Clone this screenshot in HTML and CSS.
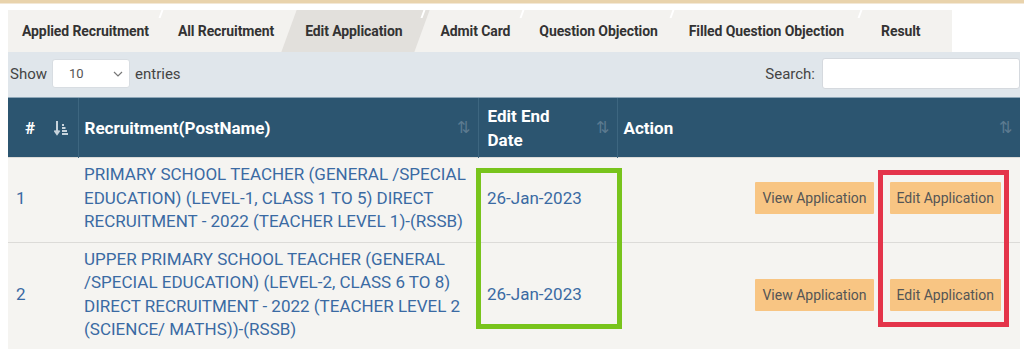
FILE: index.html
```html
<!DOCTYPE html>
<html lang="en">
<head>
  <meta charset="UTF-8" />
  <title>Edit Application</title>
  <link rel="stylesheet" href="styles.css">
</head>
<body>
  <div class="top-strip"></div>
  <div class="page">
    <ul class="tabs">
      <li>Applied Recruitment</li>
      <li>All Recruitment</li>
      <li class="active">Edit Application</li>
      <li>Admit Card</li>
      <li>Question Objection</li>
      <li>Filled Question Objection</li>
      <li class="last">Result</li>
    </ul>

    <div class="toolbar">
      <label class="length">Show
        <span class="select">10 <svg width="10" height="6" viewBox="0 0 10 6"><path d="M1 1l4 4 4-4" fill="none" stroke="#777" stroke-width="1.2"/></svg></span>
        entries</label>
      <label class="search">Search: <input type="text"></label>
    </div>

    <div class="table-wrap">
      <table class="grid">
        <thead>
          <tr>
            <th class="c-num"># <span class="sort on">
              <svg width="14" height="16" viewBox="0 0 14 16"><path d="M3 1v12M0.5 10.5L3 14l2.5-3.5" fill="none" stroke="#c7d3dc" stroke-width="2"/><rect x="8" y="4" width="2" height="2" fill="#c7d3dc"/><rect x="8" y="7" width="3.5" height="2" fill="#c7d3dc"/><rect x="8" y="10" width="5" height="2" fill="#c7d3dc"/><rect x="8" y="13" width="6" height="2" fill="#c7d3dc"/></svg></span></th>
            <th class="c-post">Recruitment(PostName) <span class="sort">&#x21C5;</span></th>
            <th class="c-date">Edit End<br>Date <span class="sort">&#x21C5;</span></th>
            <th class="c-act">Action <span class="sort">&#x21C5;</span></th>
          </tr>
        </thead>
        <tbody>
          <tr>
            <td>1</td>
            <td>PRIMARY SCHOOL TEACHER (GENERAL /SPECIAL EDUCATION) (LEVEL-1, CLASS 1 TO 5) DIRECT RECRUITMENT - 2022 (TEACHER LEVEL 1)-(RSSB)</td>
            <td>26-Jan-2023</td>
            <td class="actions"><a class="btn">View Application</a><a class="btn">Edit Application</a></td>
          </tr>
          <tr>
            <td>2</td>
            <td>UPPER PRIMARY SCHOOL TEACHER (GENERAL /SPECIAL EDUCATION) (LEVEL-2, CLASS 6 TO 8) DIRECT RECRUITMENT - 2022 (TEACHER LEVEL 2 (SCIENCE/ MATHS))-(RSSB)</td>
            <td>26-Jan-2023</td>
            <td class="actions"><a class="btn">View Application</a><a class="btn">Edit Application</a></td>
          </tr>
        </tbody>
      </table>
      <div class="mark mark-green"></div>
      <div class="mark mark-red"></div>
    </div>
  </div>
</body>
</html>
```

FILE: styles.css
```css
body {
  margin: 0;
  font-family: Roboto, "Liberation Sans", sans-serif;
  background: #fff;
  color: #333;
  height: 349px;
  overflow: hidden;
}

.top-strip {
  height: 3px;
  background: #e9d3ac;
  border-bottom: 1px solid #f3e8d6;
}

.page {
  padding: 6px 4px 0 8px;
}

.tabs {
  display: flex;
  list-style: none;
  margin: 0;
  padding: 0;
  width: 944px;
  height: 42px;
  background: #f3f2ef;
  position: relative;
  isolation: isolate;
}

.tabs li {
  position: relative;
  padding: 0 14px;
  margin-right: 1px;
  line-height: 42px;
  font-size: 14px;
  font-weight: 700;
  color: #333;
  white-space: nowrap;
  letter-spacing: -0.1px;
}

.tabs li + li::before {
  content: "";
  position: absolute;
  left: -4px;
  top: 0;
  width: 2px;
  height: 8px;
  background: #fff;
  transform: skewX(-20deg);
}

.tabs li.active {
  padding: 0 20px 0 16px;
  margin-right: 4px;
}

.tabs li.active::after {
  content: "";
  position: absolute;
  left: 0;
  right: 0;
  top: 0;
  bottom: 0;
  background: #e2e0dc;
  transform: skewX(-20deg);
  z-index: -1;
}

.tabs li.active::before {
  display: none;
}

.tabs li:nth-child(5) {
  padding-right: 16px;
}

.tabs li:nth-child(6) {
  padding-right: 18px;
}

.tabs li.last {
  padding-left: 18px;
}

.toolbar {
  display: flex;
  justify-content: space-between;
  align-items: center;
  height: 45px;
  background: #e0e6eb;
  padding: 0 0 0 2px;
  font-size: 15px;
  color: #444;
}

.length {
  display: flex;
  align-items: center;
  gap: 5px;
  margin-top: -2px;
}

.select {
  display: inline-flex;
  align-items: center;
  justify-content: space-between;
  width: 78px;
  height: 29px;
  padding: 0 6px 0 16px;
  box-sizing: border-box;
  background: #fff;
  border: 1px solid #d8dde2;
  border-radius: 3px;
  font-size: 13px;
  color: #555;
}

.search {
  display: flex;
  align-items: center;
  gap: 7px;
  margin-top: -2px;
}

.search input {
  width: 198px;
  height: 31px;
  box-sizing: border-box;
  border: 1px solid #d5d9de;
  border-radius: 3px;
  background: #fff;
}

.table-wrap {
  position: relative;
}

.grid {
  width: 100%;
  border-collapse: collapse;
  table-layout: fixed;
  font-size: 17px;
}

.grid th,
.grid td {
  box-sizing: border-box;
}

.grid th {
  background: #2c5570;
  color: #fff;
  font-weight: 700;
  text-align: left;
  height: 60px;
  padding: 0 6px;
  line-height: 24px;
  position: relative;
  border-left: 1px solid #3d6680;
  border-top: 1px solid #8ea7b8;
}

.grid th:first-child {
  border-left: none;
}

.c-num { width: 70px; padding-left: 17px !important; }
.c-post { width: 400px; }
.c-date { width: 139px; padding-left: 9px !important; }

.sort {
  position: absolute;
  right: 8px;
  top: 50%;
  transform: translateY(-50%);
  color: #5d7b90;
  font-size: 16px;
  font-weight: 400;
}

.sort.on {
  right: 10px;
  line-height: 0;
}

.grid td {
  background: #f5f4f1;
  color: #3a6aa3;
  padding: 5px 6px 8px;
  line-height: 23.5px;
  vertical-align: middle;
  border-top: 1px solid #dcdbd8;
}

.grid td:first-child {
  padding-left: 8px;
}

.grid td:nth-child(3) {
  padding-left: 9px;
}

.actions {
  text-align: right;
}

.btn {
  display: inline-block;
  background: #f8c583;
  color: #555;
  font-size: 14px;
  line-height: 32px;
  padding: 0 7px;
  margin-left: 16px;
  border-radius: 1px;
}

.actions .btn:last-child {
  margin-right: 13px;
}

.mark {
  position: absolute;
  box-sizing: border-box;
  border: 5px solid;
}

.mark-green {
  left: 468px;
  top: 71px;
  width: 146px;
  height: 161px;
  border-color: #78c41c;
}

.mark-red {
  left: 870px;
  top: 73px;
  width: 131px;
  height: 157px;
  border-color: #e4344a;
}
```
